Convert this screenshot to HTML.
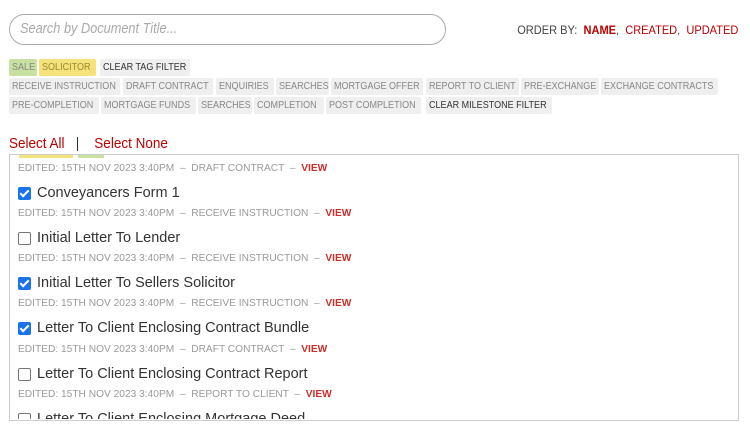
<!DOCTYPE html><html><head><style>
body{margin:0;width:750px;height:429px;background:#fff;font-family:"Liberation Sans",sans-serif;position:relative;overflow:hidden}
.a{position:absolute;white-space:nowrap}
.s{display:inline-block;transform-origin:left center}
.t{position:absolute;height:17px;background:#efefef;border-radius:2px;color:#888;font-size:10.5px;line-height:17px;overflow:visible}
.t span{display:inline-block;transform:scaleX(.86);transform-origin:left center;margin-left:3px;white-space:nowrap}
.d{color:#333}
.m{position:absolute;left:18px;font-size:10.5px;color:#9a9a9a;white-space:nowrap;transform:scaleX(.97);transform-origin:left}
.m b{color:#c9302c}
.ti{position:absolute;left:37px;font-size:14.5px;color:#333;white-space:nowrap}
.cb{position:absolute;left:18px;width:11px;height:11px;border:1px solid #777;border-radius:2px;background:#fff}
.cb.on{background:#1a73e8;border-color:#1a73e8}
.cb.on:after{content:"";position:absolute;left:3px;top:0px;width:3px;height:7px;border:solid #fff;border-width:0 2px 2px 0;transform:rotate(45deg)}
</style></head><body>
<div class="a" style="left:9px;top:14px;width:435px;height:29px;border:1px solid #aaa;border-radius:16px"></div>
<div class="a" style="left:20px;top:20px;font-size:15px;color:#aaa;font-style:italic"><span class="s" style="transform:scaleX(.85)">Search by Document Title...</span></div>
<div class="a" style="right:12px;top:23px;font-size:12px;color:#444"><span class="s" style="transform:scaleX(.92);transform-origin:right center">ORDER BY:&nbsp; <b style="color:#b00">NAME</b>,&nbsp; <span style="color:#b00">CREATED</span>,&nbsp; <span style="color:#b00">UPDATED</span></span></div>

<div class="t" style="left:9px;top:59px;width:28px;background:#c8e0a0"><span>SALE</span></div>
<div class="t" style="left:39px;top:59px;width:57px;background:#f5e27a;color:#9a8a30"><span>SOLICITOR</span></div>
<div class="t d" style="left:100px;top:59px;width:90px"><span>CLEAR TAG FILTER</span></div>

<div class="t" style="left:9px;top:78px;width:111px"><span>RECEIVE INSTRUCTION</span></div>
<div class="t" style="left:123px;top:78px;width:90px"><span>DRAFT CONTRACT</span></div>
<div class="t" style="left:216px;top:78px;width:58px"><span>ENQUIRIES</span></div>
<div class="t" style="left:276px;top:78px;width:53px"><span>SEARCHES</span></div>
<div class="t" style="left:331px;top:78px;width:92px"><span>MORTGAGE OFFER</span></div>
<div class="t" style="left:426px;top:78px;width:93px"><span>REPORT TO CLIENT</span></div>
<div class="t" style="left:521px;top:78px;width:78px"><span>PRE-EXCHANGE</span></div>
<div class="t" style="left:601px;top:78px;width:117px"><span>EXCHANGE CONTRACTS</span></div>

<div class="t" style="left:9px;top:97px;width:90px"><span>PRE-COMPLETION</span></div>
<div class="t" style="left:101px;top:97px;width:95px"><span>MORTGAGE FUNDS</span></div>
<div class="t" style="left:198px;top:97px;width:54px"><span>SEARCHES</span></div>
<div class="t" style="left:254px;top:97px;width:70px"><span>COMPLETION</span></div>
<div class="t" style="left:326px;top:97px;width:95px"><span>POST COMPLETION</span></div>
<div class="t d" style="left:426px;top:97px;width:126px"><span>CLEAR MILESTONE FILTER</span></div>

<div class="a" style="left:9px;top:135px;font-size:15px;color:#b00"><span class="s" style="transform:scaleX(.9)">Select All &nbsp;&nbsp;<span style="color:#333">|</span>&nbsp;&nbsp;&nbsp; Select None</span></div>

<div class="a" style="left:9px;top:154px;width:728px;height:265px;border:1px solid #ccc;overflow:hidden">
<div class="a" style="left:9px;top:0;width:54px;height:3px;background:#f5e27a"></div>
<div class="a" style="left:68px;top:0;width:26px;height:3px;background:#c8e0a0"></div>
</div>

<div class="m" style="top:162px">EDITED: 15TH NOV 2023 3:40PM &nbsp;–&nbsp; DRAFT CONTRACT &nbsp;–&nbsp; <b>VIEW</b></div>
<div class="cb on" style="top:187px"></div><div class="ti" style="top:185px">Conveyancers Form 1</div>
<div class="m" style="top:207px">EDITED: 15TH NOV 2023 3:40PM &nbsp;–&nbsp; RECEIVE INSTRUCTION &nbsp;–&nbsp; <b>VIEW</b></div>
<div class="cb" style="top:232px"></div><div class="ti" style="top:230px">Initial Letter To Lender</div>
<div class="m" style="top:252px">EDITED: 15TH NOV 2023 3:40PM &nbsp;–&nbsp; RECEIVE INSTRUCTION &nbsp;–&nbsp; <b>VIEW</b></div>
<div class="cb on" style="top:277px"></div><div class="ti" style="top:275px">Initial Letter To Sellers Solicitor</div>
<div class="m" style="top:297px">EDITED: 15TH NOV 2023 3:40PM &nbsp;–&nbsp; RECEIVE INSTRUCTION &nbsp;–&nbsp; <b>VIEW</b></div>
<div class="cb on" style="top:322px"></div><div class="ti" style="top:320px">Letter To Client Enclosing Contract Bundle</div>
<div class="m" style="top:343px">EDITED: 15TH NOV 2023 3:40PM &nbsp;–&nbsp; DRAFT CONTRACT &nbsp;–&nbsp; <b>VIEW</b></div>
<div class="cb" style="top:368px"></div><div class="ti" style="top:366px">Letter To Client Enclosing Contract Report</div>
<div class="m" style="top:388px">EDITED: 15TH NOV 2023 3:40PM &nbsp;–&nbsp; REPORT TO CLIENT &nbsp;–&nbsp; <b>VIEW</b></div>
<div class="a" style="left:10px;top:410px;width:727px;height:9px;overflow:hidden">
<div class="cb" style="left:8px;top:3px"></div><div class="ti" style="left:27px;top:1px">Letter To Client Enclosing Mortgage Deed</div>
</div>
</body></html>
